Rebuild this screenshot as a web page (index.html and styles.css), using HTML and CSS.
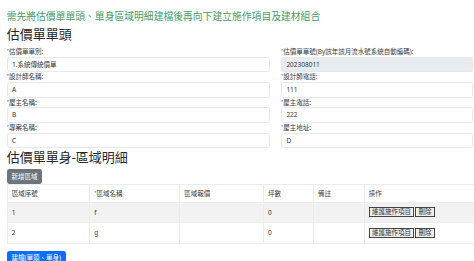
FILE: index.html
```html
<!DOCTYPE html>
<html lang="zh-Hant">
<head>
<meta charset="utf-8">
<title>估價單</title>
<link rel="stylesheet" href="styles.css">
</head>
<body>
<div class="page">
  <h4 class="notice">需先將估價單單頭、單身區域明細建檔後再向下建立施作項目及建材組合</h4>
  <h2 class="title">估價單單頭</h2>
  <div class="form-grid">
    <div class="col">
      <div class="field">
        <label class="lbl"><sup>*</sup>估價單單別:</label>
        <div class="input">1.系統傳統價單</div>
      </div>
      <div class="field">
        <label class="lbl"><sup>*</sup>設計師名稱:</label>
        <div class="input">A</div>
      </div>
      <div class="field">
        <label class="lbl"><sup>*</sup>屋主名稱:</label>
        <div class="input">B</div>
      </div>
      <div class="field">
        <label class="lbl"><sup>*</sup>專案名稱:</label>
        <div class="input">C</div>
      </div>
    </div>
    <div class="col">
      <div class="field">
        <label class="lbl"><sup>*</sup>估價單單號(By該年該月流水號系統自動編碼):</label>
        <div class="input disabled">202308011</div>
      </div>
      <div class="field">
        <label class="lbl"><sup>*</sup>設計師電話:</label>
        <div class="input">111</div>
      </div>
      <div class="field">
        <label class="lbl"><sup>*</sup>屋主電話:</label>
        <div class="input">222</div>
      </div>
      <div class="field">
        <label class="lbl"><sup>*</sup>屋主地址:</label>
        <div class="input">D</div>
      </div>
    </div>
  </div>
  <h2 class="title title-body">估價單單身-區域明細</h2>
  <div class="btn-row"><button class="btn btn-gray">新增區域</button></div>
  <table class="grid">
    <colgroup>
      <col class="c1"><col class="c2"><col class="c3"><col class="c4"><col class="c5"><col class="c6">
    </colgroup>
    <thead>
      <tr><th>區域序號</th><th><sup>*</sup>區域名稱</th><th>區域報價</th><th>坪數</th><th>備註</th><th>操作</th></tr>
    </thead>
    <tbody>
      <tr class="odd"><td>1</td><td>f</td><td></td><td>0</td><td></td><td><div class="ops"><button class="mini">維護施作項目</button><button class="mini">刪除</button></div></td></tr>
      <tr><td>2</td><td>g</td><td></td><td>0</td><td></td><td><div class="ops"><button class="mini">維護施作項目</button><button class="mini">刪除</button></div></td></tr>
    </tbody>
  </table>
  <div class="btn-row"><button class="btn btn-blue">建檔(單頭、單身)</button></div>
</div>
</body>
</html>
```
FILE: styles.css
```css
html, body {
  margin: 0;
  padding: 0;
  background: #fff;
}
body {
  overflow: hidden;
  font-family: "Noto Sans", "Noto Sans CJK TC", sans-serif;
  font-size: 6.5px;
  line-height: 9.8px;
  color: #33383d;
}
.page {
  box-sizing: border-box;
  width: 474px;
  padding: 10.8px 0 0 6.7px;
}
.notice {
  margin: 0 0 4.6px 0;
  font-size: 9.8px;
  line-height: 11.8px;
  font-weight: 400;
  color: #479a68;
}
.title {
  margin: 0 0 4px 0;
  font-size: 13px;
  line-height: 15.6px;
  font-weight: 400;
  color: #26292d;
}
.title-body {
  margin-top: 1.9px;
  margin-bottom: 3.4px;
}
.form-grid {
  display: grid;
  grid-template-columns: 263.3px 1fr;
  column-gap: 11px;
  padding-right: 1px;
}
.field {
  display: flex;
  flex-direction: column;
}
.lbl {
  height: 9.8px;
  line-height: 9.8px;
  white-space: nowrap;
}
.lbl sup {
  font-size: 4px;
  line-height: 0;
  vertical-align: 2.5px;
}
.input {
  box-sizing: border-box;
  height: 15.6px;
  line-height: 13.6px;
  padding: 0 4.4px;
  border: 1px solid #e6e9ec;
  border-radius: 2.4px;
  background: #fff;
}
.input.disabled {
  background: #e9ecef;
}
.btn-row {
  display: flex;
}
.btn {
  font-family: inherit;
  font-size: 6.5px;
  line-height: 9.8px;
  padding: 2.6px 4.9px;
  border: 0;
  border-radius: 2.4px;
  color: #fff;
}
.btn-gray {
  background: #6c757d;
}
.btn-blue {
  background: #0d6efd;
}
.grid {
  table-layout: fixed;
  width: 100%;
  border-collapse: collapse;
  margin: 0 0 7px 0;
}
.c1 { width: 82.6px; }
.c2 { width: 90px; }
.c3 { width: 83.7px; }
.c4 { width: 50px; }
.c5 { width: 50.7px; }
.c6 { width: auto; }
.grid th, .grid td {
  border: 1px solid #eaecef;
  padding: 3.3px 4px;
  text-align: left;
  font-weight: 400;
  vertical-align: middle;
  line-height: 9.8px;
}
.grid tr > :last-child {
  border-right: 0;
}
.grid th sup {
  font-size: 4px;
  line-height: 0;
  vertical-align: 2.5px;
}
.grid td {
  height: 13px;
  line-height: 13px;
}
.grid tr.odd td {
  background: #f2f2f2;
}
.ops {
  display: flex;
  gap: 0.7px;
  align-items: center;
}
.mini {
  box-sizing: border-box;
  height: 10px;
  padding: 0 2.4px;
  font-family: inherit;
  font-size: 6.5px;
  line-height: 8px;
  color: #333;
  background: #efefef;
  border: 0.8px solid #444;
  border-radius: 0;
}
```
